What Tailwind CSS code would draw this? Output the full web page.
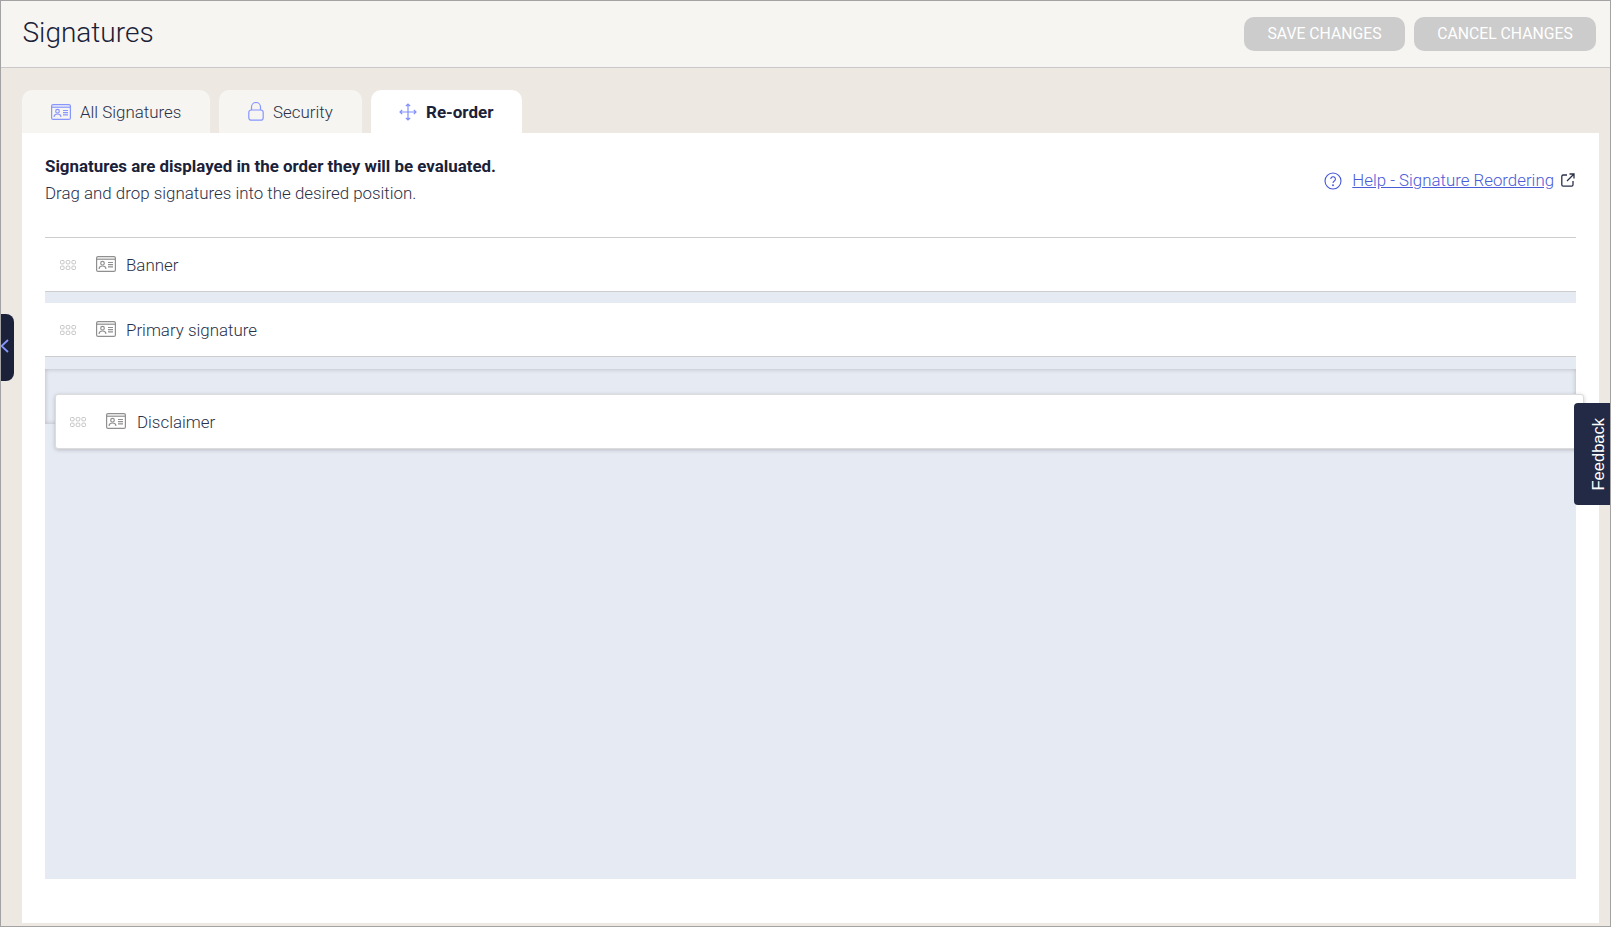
<!DOCTYPE html>
<html>
<head>
<meta charset="utf-8">
<script src="https://cdn.jsdelivr.net/npm/@tailwindcss/browser@4"></script>
<title>Signatures</title>
</head>
<body class="font-['Roboto',sans-serif]">
<svg width="0" height="0" class="absolute">
  <defs>
    <symbol id="card" viewBox="0 0 20 16"><g fill="none" stroke="currentColor" stroke-width="1.2"><rect x="0.6" y="0.6" width="18.8" height="14.8" rx="1.5"/><path d="M0.6 3.2H19.4"/><circle cx="6.5" cy="7.2" r="1.8"/><path d="M3 12.8c.3-2 1.8-2.8 3.5-2.8s3.2.8 3.5 2.8"/><path d="M12 6.5h5M12 8.7h5M12 10.9h5"/></g></symbol>
    <symbol id="grip" viewBox="0 0 16 10"><g fill="none" stroke="#c4c4c4" stroke-width="1"><rect x="0.5" y="0.5" width="3.6" height="3.4" rx="1"/><rect x="6.2" y="0.5" width="3.6" height="3.4" rx="1"/><rect x="11.9" y="0.5" width="3.6" height="3.4" rx="1"/><rect x="0.5" y="6.1" width="3.6" height="3.4" rx="1"/><rect x="6.2" y="6.1" width="3.6" height="3.4" rx="1"/><rect x="11.9" y="6.1" width="3.6" height="3.4" rx="1"/></g></symbol>
  </defs>
</svg>
<div class="relative w-[1611px] h-[927px] overflow-hidden border border-[#a3a3a3] bg-[#ede8e2] flex flex-col">
  <header class="h-[67px] shrink-0 bg-[#f6f5f1] border-b border-[#c9c9c9] flex items-center justify-between pl-[21.5px] pr-[14px]">
    <h1 class="text-[28px] font-light text-[#1a2138] leading-none -mt-[3px]">Signatures</h1>
    <div class="flex gap-[9px] -mt-[1px]">
      <button class="w-[161px] h-[34px] rounded-[10px] bg-[#cccccc] text-white text-[15.75px] font-normal">SAVE CHANGES</button>
      <button class="w-[182px] h-[34px] rounded-[10px] bg-[#cccccc] text-white text-[15.75px] font-normal">CANCEL CHANGES</button>
    </div>
  </header>

  <nav class="flex gap-[9px] pl-[21px] pt-[22px] h-[65px] shrink-0">
    <div class="w-[188px] rounded-t-[10px] bg-[#f6f5f1] flex items-center pl-[29px] gap-[9px] text-[16.9px] font-light text-[#2a3048]">
      <svg class="w-[20px] h-[16px] text-[#8796ff]"><use href="#card"/></svg><span class="mt-[3px]">All Signatures</span>
    </div>
    <div class="w-[143px] rounded-t-[10px] bg-[#f6f5f1] flex items-center pl-[29px] gap-[9px] text-[16.9px] font-light text-[#2a3048]">
      <svg class="w-[16px] h-[19px] text-[#8796ff]" viewBox="0 0 16 19" fill="none" stroke="currentColor" stroke-width="1.2"><path d="M3.5 8V5a4.5 4.5 0 0 1 9 0v3"/><rect x="0.8" y="8" width="14.4" height="10.2" rx="2.5"/></svg><span class="mt-[3px]">Security</span>
    </div>
    <div class="w-[151px] rounded-t-[10px] bg-white flex items-center pl-[28px] gap-[9px] text-[17px] font-bold text-[#1a2138]">
      <svg class="w-[18px] h-[18px] text-[#7f8fff]" viewBox="0 0 18 18" fill="none" stroke="currentColor" stroke-width="1.2"><path d="M9 1v16M1 9h16M6.8 3.2 9 1l2.2 2.2M6.8 14.8 9 17l2.2-2.2M3.2 6.8 1 9l2.2 2.2M14.8 6.8 17 9l-2.2 2.2"/></svg><span class="mt-[3px]">Re-order</span>
    </div>
  </nav>

  <main class="relative flex-1 ml-[21px] mr-[11px] mb-[3px] bg-white px-[23px] flex flex-col">
    <div class="h-[104px] shrink-0 flex justify-between pt-[19px]">
      <div class="text-[#1a2138]">
        <p class="text-[16.9px] font-bold leading-[28px]">Signatures are displayed in the order they will be evaluated.</p>
        <p class="text-[16.9px] font-light leading-[27px] text-[#2a3048]">Drag and drop signatures into the desired position.</p>
      </div>
      <div class="flex items-center h-[30px] mt-[14px] mr-[1px] gap-[10px] text-[16.85px] font-light">
        <svg class="w-[18px] h-[18px] -mt-[1px] text-[#4355d6]" viewBox="0 0 18 18" fill="none" stroke="currentColor" stroke-width="1.1"><circle cx="9" cy="9" r="8"/><path d="M6.8 7a2.3 2.3 0 1 1 3.5 2c-.9.6-1.3 1-1.3 2"/><circle cx="9" cy="13.3" r=".4"/></svg>
        <a class="underline text-[#4a5bd8]">Help - Signature Reordering</a>
        <svg class="w-[14px] h-[14px] -mt-[3px] -ml-[3px] text-[#2a3048]" viewBox="0 0 14 14" fill="none" stroke="currentColor" stroke-width="1.3"><path d="M6 2H2.2A1.4 1.4 0 0 0 .8 3.4v8.4a1.4 1.4 0 0 0 1.4 1.4h8.4a1.4 1.4 0 0 0 1.4-1.4V8M6 8l7-7M8.5 1H13v4.5"/></svg>
      </div>
    </div>

    <div class="h-[642px] shrink-0 bg-[#e6eaf3] flex flex-col">
      <div class="h-[55px] shrink-0 bg-white border-t border-b border-[#cdcdcd] flex items-center pl-[15px] gap-[20px] text-[16.9px] font-light text-[#2a3048]">
        <svg class="w-[16px] h-[10px]"><use href="#grip"/></svg>
        <span class="flex items-center gap-[10px]"><svg class="w-[20px] h-[16px] text-[#8f8f8f]"><use href="#card"/></svg><span class="mt-[3px]">Banner</span></span>
      </div>
      <div class="h-[54px] mt-[11px] shrink-0 bg-white border-b border-[#cdcdcd] flex items-center pl-[15px] gap-[20px] text-[16.9px] font-light text-[#2a3048]">
        <svg class="w-[16px] h-[10px]"><use href="#grip"/></svg>
        <span class="flex items-center gap-[10px]"><svg class="w-[20px] h-[16px] text-[#8f8f8f]"><use href="#card"/></svg><span class="mt-[3px]">Primary signature</span></span>
      </div>
      <div class="h-[55px] mt-[12px] shrink-0 bg-[#e6eaf3] shadow-[inset_0_0_5px_rgba(0,0,0,0.22)]"></div>
    </div>

    <div class="absolute left-[33px] top-[261px] w-[1529px] h-[55px] bg-white rounded-[3px] border border-[#dcdcdc] shadow-[0_1px_4px_rgba(0,0,0,0.2)] flex items-center pl-[14px] gap-[20px] text-[16.9px] font-light text-[#2a3048]">
      <svg class="w-[16px] h-[10px]"><use href="#grip"/></svg>
      <span class="flex items-center gap-[11px]"><svg class="w-[20px] h-[16px] text-[#8f8f8f]"><use href="#card"/></svg><span class="mt-[3px]">Disclaimer</span></span>
    </div>
  </main>

  <div class="absolute left-0 top-[313px] w-[13px] h-[67px] bg-[#1a2138] rounded-r-[8px] flex items-center">
    <svg class="w-[8px] h-[14px] -mt-[3px] text-[#8796ff]" viewBox="0 0 8 14" fill="none" stroke="currentColor" stroke-width="1.8"><path d="M7 1 .5 7 7 13"/></svg>
  </div>

  <div class="absolute right-0 top-[402px] w-[36px] h-[102px] bg-[#232a45] rounded-l-[4px] flex items-center justify-center pl-[12px]">
    <span class="[writing-mode:vertical-rl] rotate-180 text-white text-[16.5px] leading-none font-['Liberation_Sans',sans-serif]">Feedback</span>
  </div>
</div>
</body>
</html>
